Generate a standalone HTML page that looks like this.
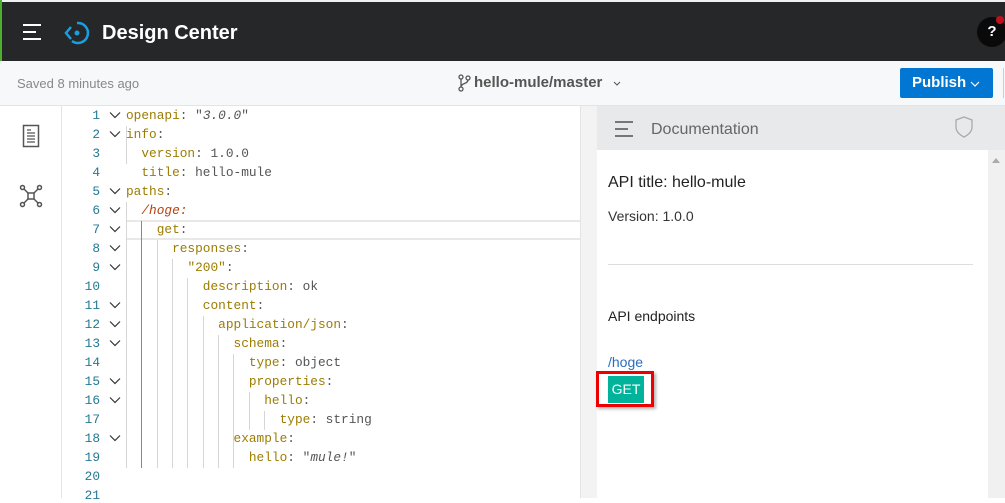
<!DOCTYPE html>
<html><head><style>
*{margin:0;padding:0;box-sizing:border-box}
body{width:1005px;height:498px;overflow:hidden;background:#fff;font-family:"Liberation Sans",sans-serif;position:relative}
.top{position:absolute;left:0;top:0;width:1005px;height:61px;background:#262729;border-top:2px solid #f0f0f0}
.green{position:absolute;left:0;top:0;width:2px;height:61px;background:#4caf2e}
.sub{position:absolute;left:0;top:61px;width:1005px;height:45px;background:#f7f8fa;border-bottom:1px solid #e3e4e6}
.side{position:absolute;left:0;top:106px;width:62px;height:392px;border-right:1px solid #e3e4e6;background:#fff}
.code{position:absolute;left:0;top:107px;font-family:"Liberation Mono",monospace;font-size:12.8px;}
.ln{position:absolute;width:100px;text-align:right;color:#237893;left:0}
.chev{position:absolute;left:109px;width:12px;height:8px}
.tx{position:absolute;left:126px;white-space:pre;color:#555}
.k{color:#9c7c00}
.r{color:#b5400f;font-style:italic}
.it{font-style:italic}
.g{position:absolute;width:1px;background:#d6d6d6}
.gutter{position:absolute;left:580px;top:106px;width:17px;height:392px;background:#f3f3f4;border-left:1px solid #e3e4e6}
.doc{position:absolute;left:597px;top:106px;width:408px;height:392px;background:#fff}
</style></head><body>
<div class="top">
 <div style="position:absolute;left:23px;top:22px;width:18px;height:2px;background:#fff"></div>
 <div style="position:absolute;left:23px;top:29px;width:13px;height:2px;background:#fff"></div>
 <div style="position:absolute;left:23px;top:36px;width:18px;height:2px;background:#fff"></div>
 <svg style="position:absolute;left:63px;top:18px" width="28" height="26" viewBox="0 0 28 26"><path d="M14 3 A10 10 0 1 1 9 21" fill="none" stroke="#1a9ee0" stroke-width="2.5"/><path d="M8 7 L3 13 L8 19" fill="none" stroke="#1a9ee0" stroke-width="2.5"/><circle cx="14" cy="13" r="2.5" fill="#1a9ee0"/></svg>
 <div style="position:absolute;left:102px;top:20px;color:#fff;font-size:20px;font-weight:bold">Design Center</div>
 <div style="position:absolute;left:977px;top:15px;width:30px;height:30px;border-radius:50%;background:#0a0a0a;color:#fff;font-weight:bold;font-size:15px;text-align:center;line-height:30px">?</div>
 <div style="position:absolute;left:996px;top:14px;width:8px;height:8px;border-radius:50%;background:#c0101c"></div>
</div>
<div class="green"></div>
<div class="sub">
 <div style="position:absolute;left:17px;top:15px;color:#888;font-size:13px">Saved 8 minutes ago</div>
 <svg style="position:absolute;left:457px;top:13px" width="14" height="18" viewBox="0 0 14 18"><circle cx="4" cy="3" r="2" fill="none" stroke="#555" stroke-width="1.3"/><circle cx="4" cy="15" r="2" fill="none" stroke="#555" stroke-width="1.3"/><circle cx="11" cy="4" r="2" fill="none" stroke="#555" stroke-width="1.3"/><path d="M4 5V13M11 6C11 10 4 9 4 13" fill="none" stroke="#555" stroke-width="1.3"/></svg>
 <div style="position:absolute;left:474px;top:13px;color:#555;font-size:15px;font-weight:bold">hello-mule/master</div>
 <svg style="position:absolute;left:613px;top:20px" width="8" height="5" viewBox="0 0 8 5"><path d="M1 1L4 4L7 1" fill="none" stroke="#555" stroke-width="1"/></svg>
 <div style="position:absolute;left:900px;top:7px;width:93px;height:30px;background:#0176d3;border-radius:2px;color:#fff;font-size:15px;font-weight:bold;line-height:30px;padding-left:12px">Publish</div>
 <svg style="position:absolute;left:970px;top:20px" width="10" height="6" viewBox="0 0 10 6"><path d="M1 1L5 5L9 1" fill="none" stroke="#fff" stroke-width="1.2"/></svg>
 <div style="position:absolute;left:1003px;top:7px;width:2px;height:30px;border-left:1px solid #ccc"></div>
</div>
<div class="side">
 <svg style="position:absolute;left:22px;top:18px" width="18" height="24" viewBox="0 0 18 24"><rect x="1.5" y="1.5" width="15" height="21" fill="none" stroke="#555" stroke-width="1.5"/><path d="M5 6H9M5 9H13M5 12H13M5 15H13M5 18H13" stroke="#555" stroke-width="1.2"/></svg>
 <svg style="position:absolute;left:19px;top:78px" width="24" height="24" viewBox="0 0 24 24"><g fill="none" stroke="#555" stroke-width="1.5"><circle cx="3.5" cy="3.5" r="2"/><circle cx="20.5" cy="3.5" r="2"/><circle cx="3.5" cy="20.5" r="2"/><circle cx="20.5" cy="20.5" r="2"/><rect x="9" y="9" width="6" height="6"/><path d="M5 5L9 9M19 5L15 9M5 19L9 15M19 19L15 15"/></g></svg>
</div>
<div class="code">
<div style="position:absolute;left:126px;top:113px;width:466px;height:20px;border-top:2px solid #e8e8e8;border-bottom:2px solid #e8e8e8"></div>
<div style="position:absolute;left:580px;top:110px;width:12px;height:2px;background:#555"></div>
<div class="g" style="left:126px;top:19px;height:38px"></div>
<div class="g" style="left:126px;top:95px;height:266px"></div>
<div class="g" style="left:141px;top:114px;height:247px;background:#888"></div>
<div class="g" style="left:157px;top:133px;height:228px"></div>
<div class="g" style="left:172px;top:152px;height:209px"></div>
<div class="g" style="left:187px;top:171px;height:190px"></div>
<div class="g" style="left:203px;top:209px;height:152px"></div>
<div class="g" style="left:218px;top:228px;height:133px"></div>
<div class="g" style="left:233px;top:247px;height:114px"></div>
<div class="g" style="left:249px;top:285px;height:38px"></div>
<div class="g" style="left:264px;top:304px;height:19px"></div>
</div>
<div class="code" id="c"></div>
<script>
var L=[['<span class="k">openapi</span>: "<span class="it">3.0.0</span>"',1],['<span class="k">info</span>:',1],['  <span class="k">version</span>: 1.0.0',0],['  <span class="k">title</span>: hello-mule',0],['<span class="k">paths</span>:',1],['  <span class="r">/hoge:</span>',1],['    <span class="k">get</span>:',1],['      <span class="k">responses</span>:',1],['        <span class="k">"200"</span>:',1],['          <span class="k">description</span>: ok',0],['          <span class="k">content</span>:',1],['            <span class="k">application/json</span>:',1],['              <span class="k">schema</span>:',1],['                <span class="k">type</span>: object',0],['                <span class="k">properties</span>:',1],['                  <span class="k">hello</span>:',1],['                    <span class="k">type</span>: string',0],['              <span class="k">example</span>:',1],['                <span class="k">hello</span>: "<span class="it">mule!</span>"',0],['',0],['',0]];
var h='';for(var i=0;i<L.length;i++){var t=i*19+1;h+='<div class="ln" style="top:'+t+'px">'+(i+1)+'</div>';if(L[i][1])h+='<svg class="chev" style="top:'+(t+3)+'px" viewBox="0 0 12 8"><path d="M1 1.5L6 6.5L11 1.5" fill="none" stroke="#333" stroke-width="1.2"/></svg>';h+='<div class="tx" style="top:'+t+'px">'+L[i][0]+'</div>';}
document.getElementById('c').innerHTML=h;
</script>
<div class="gutter"></div>
<div class="doc">
 <div style="position:absolute;left:0;top:0;width:408px;height:44px;background:#e8e9ea"></div>
 <div style="position:absolute;left:18px;top:15px;width:18px;height:2px;background:#777"></div>
 <div style="position:absolute;left:18px;top:22px;width:13px;height:2px;background:#777"></div>
 <div style="position:absolute;left:18px;top:29px;width:18px;height:2px;background:#777"></div>
 <div style="position:absolute;left:54px;top:15px;color:#666;font-size:16px">Documentation</div>
 <svg style="position:absolute;left:357px;top:10px" width="20" height="22" viewBox="0 0 20 22"><path d="M10 1L18 4V11C18 16 14 19 10 21C6 19 2 16 2 11V4Z" fill="none" stroke="#aaa" stroke-width="1.3"/></svg>
 <div style="position:absolute;left:391px;top:44px;width:17px;height:348px;background:#f0f0f0"></div>
 <div style="position:absolute;left:395px;top:52px;border:4px solid transparent;border-bottom:5px solid #aaa;border-top:none"></div>
 <div style="position:absolute;left:11px;top:68px;color:#222;font-size:16px">API title: hello-mule</div>
 <div style="position:absolute;left:11px;top:102px;color:#333;font-size:14px">Version: 1.0.0</div>
 <div style="position:absolute;left:11px;top:158px;width:365px;height:1px;background:#ddd"></div>
 <div style="position:absolute;left:11px;top:202px;color:#222;font-size:14px">API endpoints</div>
 <div style="position:absolute;left:11px;top:248px;color:#2a6ebb;font-size:14px">/hoge</div>
 <div style="position:absolute;left:-1px;top:265px;width:58px;height:36px;border:3px solid #e00;box-shadow:2px 2px 3px rgba(0,0,0,.3)"></div>
 <div style="position:absolute;left:11px;top:270px;width:36px;height:27px;background:#00b39a;color:#fff;font-size:14px;text-align:center;line-height:27px">GET</div>
</div>
</body></html>
